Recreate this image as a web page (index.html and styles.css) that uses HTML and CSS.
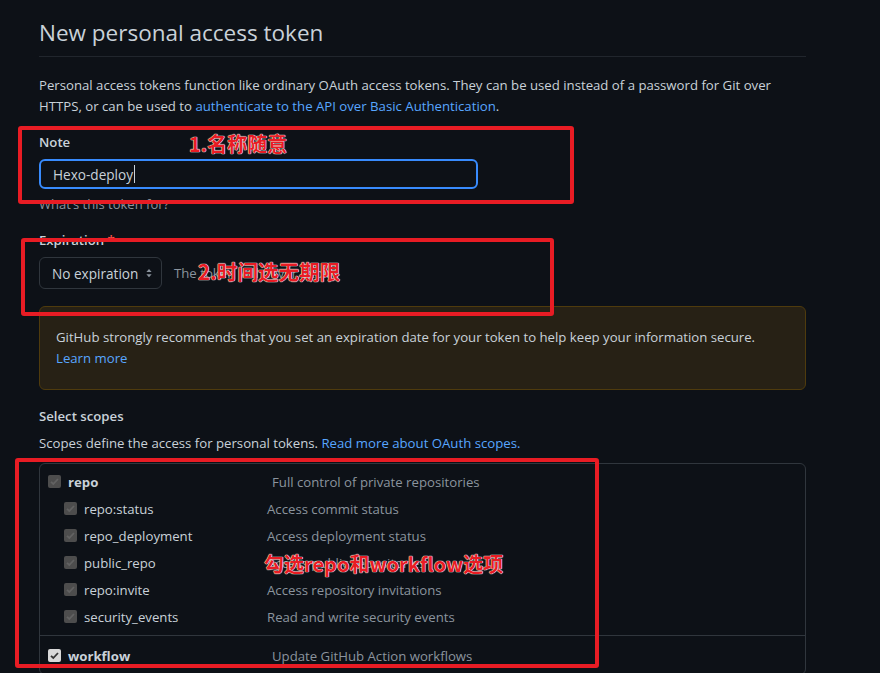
FILE: index.html
```html
<!DOCTYPE html>
<html lang="en">
<head>
<meta charset="utf-8">
<title>New personal access token</title>
<link rel="stylesheet" href="styles.css">
</head>
<body>
<main class="page">
  <h1 class="title">New personal access token</h1>
  <p class="intro">Personal access tokens function like ordinary OAuth access tokens. They can be used instead of a password for Git over HTTPS, or can be used to <a href="#">authenticate to the API over Basic Authentication</a>.</p>

  <div class="field">
    <label class="label">Note</label>
    <div class="input"><span>Hexo-deploy</span><span class="caret"></span></div>
    <div class="hint">What’s this token for?</div>
  </div>

  <div class="field">
    <label class="label">Expiration <span class="req">*</span></label>
    <div class="exp-row">
      <div class="select">No expiration
        <svg class="updown" viewBox="0 0 16 16" width="12" height="12"><path d="M8 2.5 4.5 6.5h7z M8 13.5 4.5 9.5h7z" fill="#8b949e"/></svg>
      </div>
      <span class="exp-note">The token will never expire</span>
    </div>
  </div>

  <div class="flash">
    GitHub strongly recommends that you set an expiration date for your token to help keep your information secure.<br>
    <a href="#">Learn more</a>
  </div>

  <h3 class="label scopes-title">Select scopes</h3>
  <p class="scopes-desc">Scopes define the access for personal tokens. <a href="#">Read more about OAuth scopes.</a></p>

  <div class="scopes">
    <div class="group">
      <div class="row parent"><span class="cb dis"></span><span class="name">repo</span><span class="desc">Full control of private repositories</span></div>
      <div class="row child"><span class="cb dis"></span><span class="name">repo:status</span><span class="desc">Access commit status</span></div>
      <div class="row child"><span class="cb dis"></span><span class="name">repo_deployment</span><span class="desc">Access deployment status</span></div>
      <div class="row child"><span class="cb dis"></span><span class="name">public_repo</span><span class="desc">Access public repositories</span></div>
      <div class="row child"><span class="cb dis"></span><span class="name">repo:invite</span><span class="desc">Access repository invitations</span></div>
      <div class="row child"><span class="cb dis"></span><span class="name">security_events</span><span class="desc">Read and write security events</span></div>
    </div>
    <div class="group">
      <div class="row parent"><span class="cb on"></span><span class="name">workflow</span><span class="desc">Update GitHub Action workflows</span></div>
    </div>
  </div>

  <div class="mark mark1"></div>
  <div class="mark mark2"></div>
  <div class="mark mark3"></div>
  <div class="note note1">1.名称随意</div>
  <div class="note note2">2.时间选无期限</div>
  <div class="note note3">勾选repo和workflow选项</div>
</main>
</body>
</html>
```

FILE: styles.css
```css
html, body {
  margin: 0;
  background: #0d1117;
  height: 100%;
  overflow: hidden;
}
body {
  font-family: "Open Sans", "Noto Sans", sans-serif;
  font-size: 13.2px;
  color: #c9d1d9;
}
a { color: #58a6ff; text-decoration: none; }

.page {
  position: relative;
  width: 767px;
  padding: 0 0 0 39px;
}

.title {
  margin: 0;
  padding: 17px 0 8px;
  font-size: 22.5px;
  font-weight: 400;
  line-height: 31px;
  color: #c9d1d9;
  border-bottom: 1px solid #21262d;
}

.intro {
  margin: 18px 0 15px;
  line-height: 21px;
}

.label {
  display: block;
  margin: 0;
  font-size: 13.2px;
  font-weight: 600;
  line-height: 21px;
  color: #c9d1d9;
}
.req { color: #f85149; }

.input {
  margin-top: 6px;
  width: 411px;
  height: 26px;
  padding: 0 12px;
  border: 2px solid #388bfd;
  border-radius: 6px;
  display: flex;
  align-items: center;
  font-size: 13.6px;
  color: #c9d1d9;
}
.caret {
  display: inline-block;
  width: 1px;
  height: 18px;
  background: #c9d1d9;
  margin-left: 1px;
}
.hint {
  margin: 6px 0 17px;
  font-size: 13px;
  line-height: 18px;
  color: #8b949e;
}

.exp-row {
  margin-top: 6px;
  display: flex;
  align-items: center;
  gap: 12px;
}
.select {
  box-sizing: border-box;
  width: 123px;
  height: 32px;
  padding: 0 6px 0 12px;
  border: 1px solid #30363d;
  border-radius: 6px;
  display: flex;
  align-items: center;
  justify-content: space-between;
  font-size: 13.6px;
  color: #c9d1d9;
}
.exp-note { color: #8b949e; }

.flash {
  margin-top: 17px;
  padding: 20px 16px;
  border: 1px solid #4f3b0d;
  border-radius: 6px;
  background: #272115;
  line-height: 21px;
  color: #c9d1d9;
}

.scopes-title { margin-top: 16px; }
.scopes-desc { margin: 6px 0 9px; line-height: 21px; }

.scopes {
  border: 1px solid #30363d;
  border-radius: 6px;
  padding-top: 4px;
}
.group { padding: 0 0 5px; }
.group + .group { border-top: 1px solid #30363d; padding-top: 6px; }

.row {
  display: flex;
  align-items: center;
  height: 27px;
}
.row.parent { padding-left: 8px; }
.row.child { padding-left: 24px; }
.row.parent .name { font-weight: 700; width: 204px; }
.row.child .name { width: 183px; }
.row .cb { margin-right: 7px; }
.name { color: #c9d1d9; }
.desc { color: #8b949e; }

.cb {
  width: 13px;
  height: 13px;
  border-radius: 2px;
  flex: none;
  background-repeat: no-repeat;
  background-position: center;
}
.cb.dis {
  background-color: #4d4d4d;
  background-image: url("data:image/svg+xml,%3Csvg xmlns='http://www.w3.org/2000/svg' viewBox='0 0 13 13'%3E%3Cpath d='M3 6.8 5.3 9 10 4' fill='none' stroke='%23626262' stroke-width='1.8'/%3E%3C/svg%3E");
}
.cb.on {
  background-color: #d8d8d8;
  background-image: url("data:image/svg+xml,%3Csvg xmlns='http://www.w3.org/2000/svg' viewBox='0 0 13 13'%3E%3Cpath d='M3 6.8 5.3 9 10 4' fill='none' stroke='%23333' stroke-width='1.8'/%3E%3C/svg%3E");
}

.mark {
  position: absolute;
  box-sizing: border-box;
  border: 4px solid #e81c24;
  border-radius: 3px;
}
.mark1 { left: 18px; top: 126px; width: 556px; height: 78px; }
.mark2 { left: 21px; top: 238px; width: 533px; height: 78px; }
.mark3 { left: 15px; top: 458px; width: 584px; height: 210px; }

.note {
  position: absolute;
  font-family: "Noto Sans CJK SC", "Noto Sans", sans-serif;
  font-weight: 700;
  font-size: 20px;
  line-height: 24px;
  color: #e81c24;
  text-shadow: 0 0 1px #fff, 0 0 1px #fff, 0 0 1px #fff;
  white-space: nowrap;
}
.note1 { left: 189px; top: 132px; }
.note2 { left: 198px; top: 259px; font-size: 20.6px; }
.note3 { left: 264px; top: 552px; }
```
